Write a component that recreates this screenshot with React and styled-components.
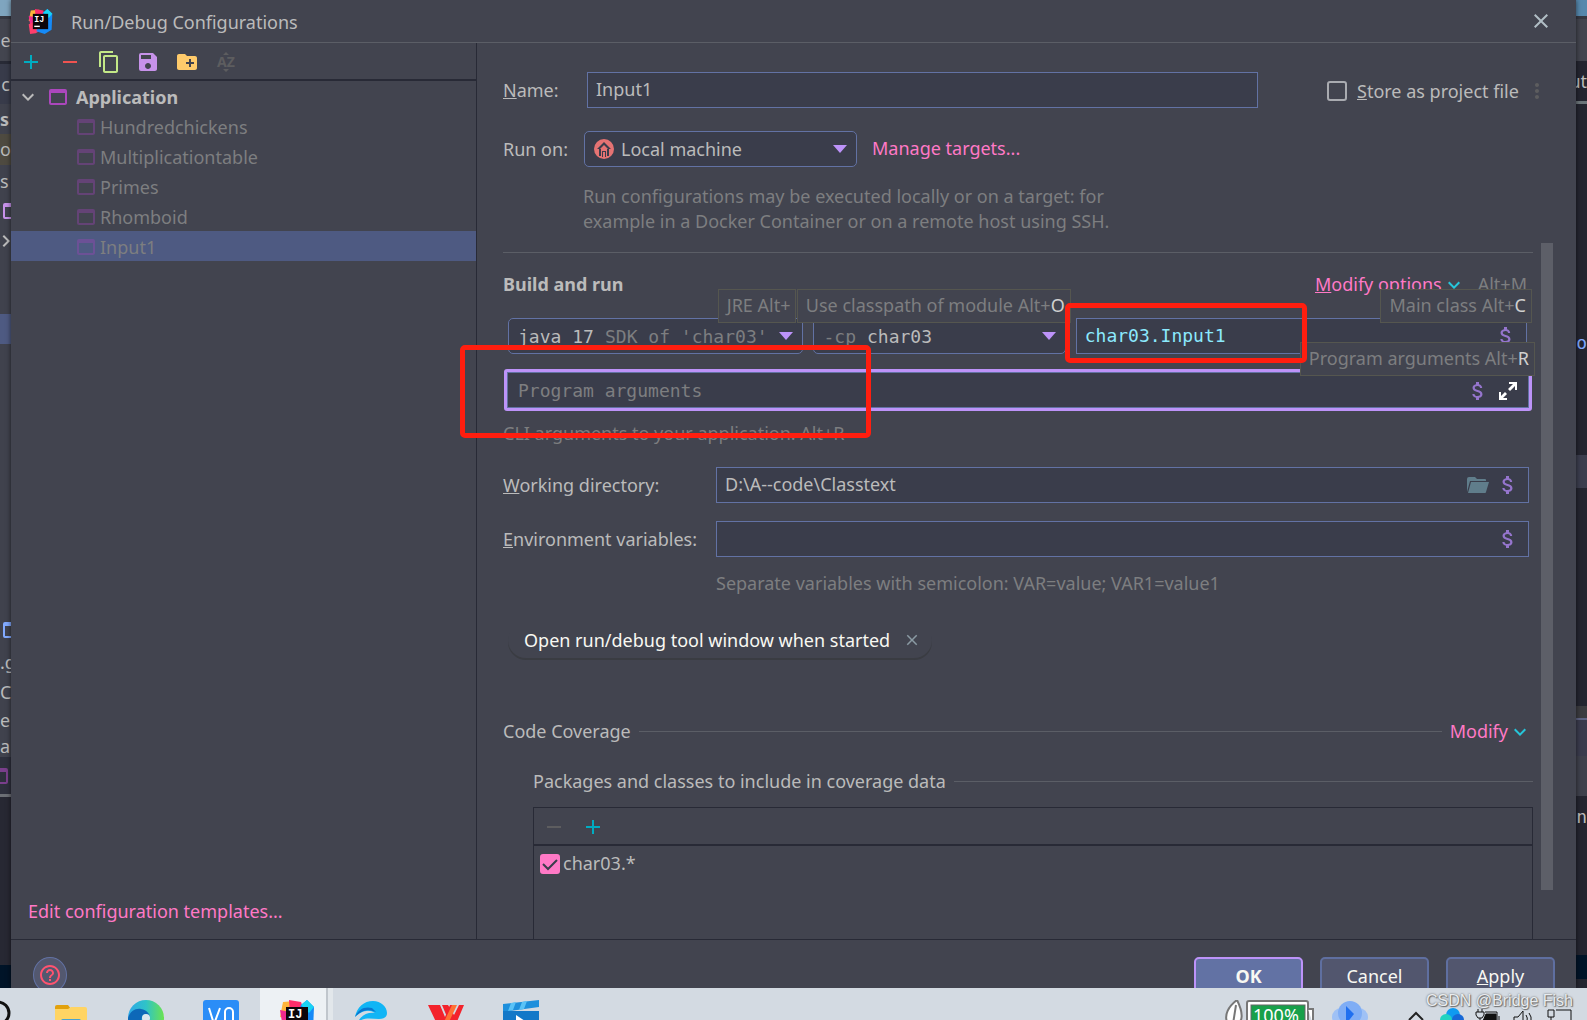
import React from 'react';
import styled, { createGlobalStyle } from 'styled-components'
import {
  MdAdd,
  MdRemove,
  MdContentCopy,
  MdSave,
  MdCreateNewFolder,
  MdWebAsset,
  MdClose,
  MdExpandMore,
  MdChevronRight,
  MdAttachMoney,
  MdHelpOutline,
  MdMoreVert,
} from 'react-icons/md'

const ui = `'Noto Sans', 'Open Sans', 'Noto Sans CJK SC', sans-serif`
const mono = `'DejaVu Sans Mono', 'Liberation Mono', monospace`

const color = {
  panel: '#42444f',
  field: '#3a3d4b',
  border: '#6272a4',
  line: '#5b5e66',
  dark: '#282a36',
  text: '#bbbbbb',
  muted: '#7d7e80',
  pink: '#ff79c6',
  purple: '#bd93f9',
  mark: '#ff1e0f',
}

const GlobalStyle = createGlobalStyle`
  * {
    box-sizing: border-box;
  }
  body {
    margin: 0;
    background: ${color.dark};
    color: ${color.text};
    font: 18px/25px ${ui};
  }
  button, input, select {
    margin: 0;
    padding: 0;
    border: 0;
    background: none;
    color: inherit;
    font: inherit;
  }
  svg {
    display: block;
    flex: none;
  }
`

const Page = styled.div`
  display: flex;
  flex-direction: column;
  height: 100vh;
  overflow: hidden;
`
const Desktop = styled.div`
  display: flex;
  flex: 1;
  min-height: 0;
`

/* slivers of the editor behind the dialog */
const Strip = styled.div`
  flex: 0 0 11px;
  overflow: hidden;
  background: ${props => props.$bg};
`
const Band = styled.div`
  display: flex;
  align-items: center;
  justify-content: ${props => props.$align || 'flex-start'};
  height: ${props => props.$h}px;
  overflow: hidden;
  background: ${props => props.$bg || 'transparent'};
  color: ${props => props.$color || color.text};
  font-weight: ${props => (props.$bold ? 700 : 400)};
  font-family: ${props => (props.$mono ? mono : ui)};
`

const Dialog = styled.section`
  display: flex;
  flex: 1;
  flex-direction: column;
  min-width: 0;
  position: relative;
  background: ${color.panel};
  box-shadow: 0 0 5px rgba(0, 0, 0, 0.6);
`
const Header = styled.header`
  display: flex;
  align-items: center;
  flex: 0 0 43px;
  gap: 18px;
  padding: 0 23px 0 17px;
  border-bottom: 1px solid ${color.line};
`
const Title = styled.h1`
  flex: 1;
  margin: 0;
  padding-top: 2px;
  font-size: 18px;
  font-weight: 400;
`
const IconButton = styled.button`
  display: flex;
  align-items: center;
  justify-content: center;
  min-width: 24px;
  height: 24px;
  color: ${props => props.$color};
`
const Body = styled.div`
  display: flex;
  flex: 1;
  min-height: 0;
`

const Sidebar = styled.aside`
  display: flex;
  flex: 0 0 466px;
  flex-direction: column;
  border-right: 1px solid ${color.dark};
`
const Toolbar = styled.div`
  display: flex;
  align-items: center;
  gap: 15px;
  height: 38px;
  padding: 2px 0 0 8px;
  border-bottom: 2px solid ${color.dark};
`
const Tree = styled.ul`
  flex: 1;
  margin: 0;
  padding: 0;
  list-style: none;
`
const TreeItem = styled.li`
  display: flex;
  align-items: center;
  gap: ${props => (props.$root ? 6 : 2)}px;
  height: 30px;
  padding: 2px 0 0 ${props => (props.$root ? 5 : 63)}px;
  background: ${props => (props.$selected ? '#4e5a82' : 'transparent')};
  color: ${props => (props.$root ? color.text : color.muted)};
  font-weight: ${props => (props.$root ? 700 : 400)};

  svg {
    color: ${props => (props.$root ? '#ab47bc' : props.$selected ? '#6c5196' : '#644376')};
  }
  svg:first-child:not(:only-of-type) {
    color: ${color.text};
  }
`
const Link = styled.a`
  display: inline-flex;
  align-items: center;
  color: ${color.pink};
  text-decoration: none;
  white-space: nowrap;

  svg {
    color: #26c6da;
  }
`
const SidebarFooter = styled.div`
  padding: 0 17px 15px;
`

const Main = styled.main`
  display: flex;
  flex: 1;
  flex-direction: column;
  min-width: 0;
  padding: 29px 23px 0 26px;
`
const FormRow = styled.div`
  display: flex;
  align-items: center;
  margin-top: ${props => props.$top || 0}px;
  padding-right: ${props => props.$right || 0}px;
`
const Label = styled.label`
  flex: 0 0 ${props => props.$width}px;
  white-space: nowrap;
`
const Field = styled.div`
  display: flex;
  align-items: center;
  position: relative;
  flex: ${props => props.$grow || 1} 1 0;
  gap: 6px;
  min-width: 0;
  height: 36px;
  padding: 0 8px;
  border: 1px solid ${color.border};
  background: ${color.field};
  color: #9575cd;
`
const TextInput = styled.input`
  flex: 1;
  min-width: 0;
  padding-bottom: 2px;
  outline: none;
  color: ${props => (props.$code ? '#8be9fd' : color.text)};
  font-family: ${props => (props.$mono ? mono : ui)};

  &::placeholder {
    color: ${color.muted};
    opacity: 1;
  }
`
const Combo = styled.div`
  display: flex;
  align-items: center;
  position: relative;
  flex: ${props => (props.$width ? `0 0 ${props.$width}px` : `${props.$grow} 1 0`)};
  gap: ${props => (props.$mono ? 11 : 7)}px;
  min-width: 0;
  height: 36px;
  padding: 0 9px;
  border: 1px solid ${color.border};
  border-radius: 5px;
  background: ${color.field};
  color: ${color.muted};
  font-family: ${props => (props.$mono ? mono : ui)};
  white-space: nowrap;

  select {
    appearance: none;
    color: ${color.text};
    outline: none;
  }
  svg:last-of-type {
    margin-left: auto;
  }
`
const Check = styled.span`
  display: grid;
  width: 20px;
  height: 20px;

  > * {
    grid-area: 1 / 1;
  }
  input {
    appearance: none;
    width: 20px;
    height: 20px;
    border: 2px solid #a9abb0;
    border-radius: 3px;
  }
  input:checked {
    border-color: ${color.pink};
    background: ${color.pink};
  }
  svg {
    pointer-events: none;
  }
`
const StoreOption = styled.div`
  display: flex;
  align-items: center;
  flex: 0 0 226px;
  gap: 10px;
  margin-left: 69px;
  padding-top: 2px;
  white-space: nowrap;

  button {
    margin-left: -4px;
  }
`
const Hint = styled.p`
  margin: ${props => props.$top}px 0 0 ${props => props.$left || 0}px;
  max-width: 560px;
  color: ${color.muted};
`
const TargetsLink = styled(Link)`
  padding: 0 0 2px 15px;
`
const ScrollArea = styled.div`
  display: flex;
  flex: 1;
  gap: 8px;
  min-height: 0;
  margin-top: 9px;
`
const ScrollContent = styled.div`
  display: flex;
  flex: 1;
  flex-direction: column;
  min-width: 0;
`
const ScrollThumb = styled.div`
  flex: 0 0 12px;
  height: 93%;
  background: #5d5f68;
`
const Rule = styled.hr`
  flex: none;
  width: 100%;
  margin: 9px 0 0;
  border: 0;
  border-top: 1px solid ${color.line};
`
const SectionHead = styled.div`
  display: flex;
  align-items: center;
  gap: 8px;
  margin-top: ${props => props.$top}px;
  padding-left: ${props => props.$left || 0}px;
  padding-right: ${props => props.$right || 0}px;
`
const SectionTitle = styled.h2`
  margin: 0;
  font-size: 18px;
  font-weight: ${props => (props.$bold ? 700 : 400)};
`
const Filler = styled.span`
  flex: 1;
  height: 1px;
  background: ${props => (props.$line ? color.line : 'transparent')};
`
const Shortcut = styled.span`
  padding-left: 4px;
  color: ${color.muted};
`
const CommandRow = styled.div`
  display: flex;
  gap: 10px;
  margin: 21px 6px 0 5px;
`
const ArgumentsField = styled(Field)`
  flex: none;
  height: 42px;
  margin: 15px 1px 0;
  padding: 2px 9px 0 11px;
  border: 3px solid ${color.purple};
  border-radius: 3px;
  box-shadow: inset 0 0 0 1px ${color.border};
`
const Tooltip = styled.span`
  position: absolute;
  z-index: 1;
  right: ${props => props.$right || -6}px;
  bottom: calc(100% - 4px);
  height: 34px;
  padding: 3px 5px 3px 8px;
  border: 1px solid #55564f;
  background: ${color.panel};
  color: ${color.muted};
  font-family: ${ui};
  white-space: nowrap;

  b {
    color: #d0d0d0;
    font-weight: 400;
  }
`
const Marker = styled.span`
  position: absolute;
  z-index: 2;
  left: ${props => props.$left}px;
  top: ${props => props.$top}px;
  width: ${props => props.$width}px;
  height: ${props => props.$height}px;
  border: 5px solid ${color.mark};
  border-radius: 5px;
  pointer-events: none;
`
const Chip = styled.div`
  display: flex;
  align-items: center;
  align-self: flex-start;
  gap: 10px;
  height: 36px;
  margin: 26px 0 0 5px;
  padding: 0 8px 0 16px;
  border-radius: 18px;
  box-shadow: 0 2px 0 #3a3c42;
  color: #f8f8f2;
`
const Packages = styled.div`
  flex: 1;
  margin: 13px 0 0 30px;
  border: 1px solid ${color.dark};
  border-bottom: 0;
`
const PackageRow = styled.label`
  display: flex;
  align-items: center;
  gap: 3px;
  padding: 5px 6px;
`

const Footer = styled.footer`
  display: flex;
  flex: 0 0 49px;
  align-items: flex-start;
  gap: 17px;
  padding: 17px 21px 0 22px;
  overflow: hidden;
  border-top: 1px solid ${color.dark};
`
const HelpButton = styled.button`
  display: flex;
  align-items: center;
  justify-content: center;
  width: 34px;
  height: 36px;
  margin-right: auto;
  border: 1px solid ${color.border};
  border-radius: 50%;
  background: #53586f;
  color: #ff5370;
`
const Button = styled.button`
  width: 109px;
  height: 38px;
  border: 2px solid ${props => (props.$primary ? color.purple : '#5f6fa0')};
  border-radius: 5px;
  background: ${props => (props.$primary ? '#6272a4' : '#52566e')};
  color: #f8f8f2;
  font-weight: ${props => (props.$primary ? 700 : 400)};
`

const Taskbar = styled.nav`
  display: flex;
  position: relative;
  flex: 0 0 32px;
  overflow: hidden;
  background: #d3dae2;
`
const TaskItem = styled.button`
  display: flex;
  align-items: flex-start;
  justify-content: center;
  width: ${props => props.$width || 75}px;
  height: 32px;
  margin-right: ${props => props.$gap || 0}px;
  padding-top: 12px;
  overflow: hidden;
`
const ActiveTask = styled(TaskItem)`
  width: 73px;
  margin-left: 2px;
  background: #edf1f4;
  box-shadow: inset -5px 0 #e2e7eb, inset -7px 0 #c0c6cc;
`
const Tray = styled.div`
  display: flex;
  margin-left: auto;
  padding-right: 9px;
`
const Watermark = styled.span`
  position: absolute;
  right: 14px;
  top: 1px;
  color: #e9ecef;
  font: 16px/24px 'Liberation Sans', sans-serif;
  text-shadow: 0 0 2px #555, 1px 1px 1px #777;
`

const IdeaLogo = ({ size }) => (
  <svg width={size} height={size} viewBox="0 0 36 36">
    <path d="M4 2l12-1 4 8-12 10-7-2z" fill="#ffb43a" />
    <path d="M10 0l12 2 3 8-14 4z" fill="#ff2d6b" />
    <path d="M1 10l10 2v14l-8-4z" fill="#f0288c" />
    <path d="M1 22l9-4 10 12-9 5-8 1z" fill="#ff3e6c" />
    <path d="M22 5l6-5 7 7-1 23-10 6-12-4z" fill="#158af7" />
    <path d="M22 5l6-5 7 7-5 6z" fill="#19d3f3" />
    <rect x="7" y="7" width="22" height="22" fill="#0d0509" />
    <text x="9" y="18" fill="#fff" fontSize="12" fontWeight="700" fontFamily="Liberation Mono, monospace">IJ</text>
    <rect x="9" y="24" width="8" height="2" fill="#fff" />
  </svg>
)
const SortIcon = () => (
  <svg width="24" height="24" viewBox="0 0 24 24" fill="#5d5d5f">
    <path d="M9 5l3-3 3 3zM9 19l3 3 3-3z" />
    <text x="12" y="17" textAnchor="middle" fontSize="14" fontWeight="700" fontFamily="Noto Sans, sans-serif">AZ</text>
  </svg>
)
const Arrow = () => (
  <svg width="14" height="8" viewBox="0 0 14 8"><path d="M0 0h14L7 8z" fill="#bd93f9" /></svg>
)
const HomeIcon = () => (
  <svg width="20" height="20" viewBox="0 0 20 20">
    <circle cx="10" cy="10" r="10" fill="#e57373" />
    <path d="M10 3l-7 7h2v7h10v-7h2z" fill="#3a3d4b" />
    <path d="M10 6l-4 4v0h1v8h6v-8h1z" fill="#e57373" />
    <path d="M8 12h4v6H8z" fill="#3a3d4b" />
    <path d="M9 13h2v5H9z" fill="#e57373" />
  </svg>
)
const ExpandIcon = () => (
  <svg width="18" height="18" viewBox="0 0 18 18" fill="#fff">
    <path d="M10 0h8v8h-2V4l-5 5-2-2 5-5h-4z" />
    <path d="M8 18H0v-8h2v4l4-4 2 2-4 4h4z" />
  </svg>
)
const OpenFolder = () => (
  <svg width="22" height="16" viewBox="0 0 22 16" fill="#607d8b">
    <path d="M0 15V2a2 2 0 012-2h6l2 2h8a1 1 0 011 1v1H3z" />
    <path d="M4 5h18l-3 10a1 1 0 01-1 1H1z" />
  </svg>
)
const Tick = () => (
  <svg width="20" height="20" viewBox="0 0 20 20">
    <path d="M3 10l5 5 9-9" fill="none" stroke="#3a3d4b" strokeWidth="2" />
  </svg>
)

const SearchTask = () => (
  <svg width="33" height="24"><circle cx="-2" cy="13" r="11" fill="none" stroke="#111" strokeWidth="3" /></svg>
)
const FolderTask = () => (
  <svg width="32" height="24">
    <path d="M0 7a2 2 0 012-2h11l3 4H0z" fill="#e2a10d" />
    <path d="M0 9h13l3-2h14a2 2 0 012 2v15H0z" fill="#ffd463" />
    <path d="M6 24v-3a2 2 0 012-2h16a2 2 0 012 2v3z" fill="#4aa3d0" />
  </svg>
)
const EdgeTask = () => (
  <svg width="36" height="36" viewBox="0 0 36 36">
    <defs>
      <linearGradient id="edge" x1="0" x2="1">
        <stop offset="0" stopColor="#2da8e8" />
        <stop offset="0.5" stopColor="#2fc3c8" />
        <stop offset="1" stopColor="#6be34f" />
      </linearGradient>
    </defs>
    <circle cx="18" cy="18" r="18" fill="url(#edge)" />
    <path d="M0 18c2-7 8-10 13-9 6 1 9 5 9 9l-4-4c-4 0-5 4-4 8H0z" fill="#0d68b8" />
    <circle cx="18" cy="18" r="4" fill="#dce7ee" />
  </svg>
)
const VncTask = () => (
  <svg width="36" height="36">
    <rect width="36" height="36" rx="3" fill="#2b8df7" />
    <path d="M6 8l5 16 6-16M22 21v-9a4 4 0 018 0v9" fill="none" stroke="#fff" strokeWidth="2" />
  </svg>
)
const BrowserTask = () => (
  <svg width="34" height="24">
    <path d="M1 17C3 7 10 1 19 1c8 0 14 6 14 12 0 4-3 6-8 6-7 0-15-2-21 3 3-7 10-10 17-9-7-5-15-1-20 4z" fill="#11b5f5" />
    <path d="M1 17C4 9 11 6 18 8l4 4C13 8 7 11 1 17z" fill="#0a76cf" />
  </svg>
)
const WpsTask = () => (
  <svg width="36" height="24">
    <path d="M0 5h12l5 12 5-12h4l-9 19H9z" fill="#f3232c" />
    <path d="M14 5h6l6 10 5-10h5l-8 19h-6z" fill="#f3232c" />
    <path d="M24 5l-9 19h5l9-19z" fill="#ff7134" />
  </svg>
)
const VideoTask = () => (
  <svg width="36" height="24">
    <path d="M0 4L36 0v7L0 12z" fill="#1d8fdc" />
    <path d="M8 3l5-1-3 8-5 1zM19 2l5-1-3 8-5 1z" fill="#59c2f7" />
    <path d="M0 11h36v13H0z" fill="#1378c8" />
    <path d="M13 15l9 6-9 5z" fill="#fff" />
  </svg>
)
const LeafTask = () => (
  <svg width="20" height="24">
    <path d="M13 0c4 8 6 14 4 20l-4 4H4C-1 15 5 6 13 0zM12 5L9 24" fill="#fff" stroke="#777" strokeWidth="2" />
  </svg>
)
const PowerTask = () => (
  <svg width="70" height="24">
    <rect x="1" y="1" width="61" height="30" rx="2" fill="#fff" stroke="#777" strokeWidth="2" />
    <path d="M62 9h5v15" fill="#fff" stroke="#777" strokeWidth="2" />
    <rect x="5" y="5" width="54" height="24" fill="#18a04a" stroke="#666" />
    <text x="7" y="22" fill="#fff" fontSize="18" fontFamily="Noto Sans, sans-serif">100%</text>
  </svg>
)
const CloudTask = () => (
  <svg width="36" height="24">
    <circle cx="9" cy="17" r="9" fill="#9fc1f5" />
    <circle cx="27" cy="17" r="9" fill="#9fc1f5" />
    <circle cx="18" cy="13" r="12" fill="#7fadf5" />
    <path d="M14 6l8 8-8 10z" fill="#1f6ff0" />
  </svg>
)
const UpTask = () => (
  <svg width="18" height="20"><path d="M2 20l7-7 7 7" fill="none" stroke="#222" strokeWidth="2" /></svg>
)
const GemTask = () => (
  <svg width="24" height="20">
    <circle cx="13" cy="15" r="7" fill="#0f9af0" />
    <circle cx="6" cy="20" r="6" fill="#22d3c0" />
    <circle cx="18" cy="20" r="6" fill="#1668d6" />
  </svg>
)
const PlugTask = () => (
  <svg width="26" height="20" fill="none" stroke="#111">
    <path d="M3 9v3M7 9v3M1 12h8v3l-2 3H3l-2-3zM5 18v3" />
    <path d="M10 12h12v8M24 16v4" />
    <path d="M11 14h10v7H8z" fill="#111" />
  </svg>
)
const SoundTask = () => (
  <svg width="22" height="20" fill="none" stroke="#111">
    <path d="M1 20v-3h4l5-6v10M13 15q2 3 1 6M16 13q3 4 2 8" />
  </svg>
)
const NetworkTask = () => (
  <svg width="26" height="20" fill="none" stroke="#111">
    <path d="M9 10h15v11M1 10h6v7H1zM4 17v4" />
  </svg>
)

const configurations = ['Hundredchickens', 'Multiplicationtable', 'Primes', 'Rhomboid', 'Input1']

const Dollar = () => (
  <IconButton type="button" $color="#9575cd" aria-label="Insert macro">
    <MdAttachMoney size={24} />
  </IconButton>
)

const LeftStrip = () => (
  <Strip $bg="#40424d">
    <Band $h={16} $bg="#7fa5bf" />
    <Band $h={3} $bg="#363842" />
    <Band $h={42} $bg="#43454f" $align="center">e</Band>
    <Band $h={3} $bg={color.dark} />
    <Band $h={40} $bg="#383b4a" $align="center">c</Band>
    <Band $h={30} $bold>s</Band>
    <Band $h={31} $bg="#4e4a40">o</Band>
    <Band $h={32}>s</Band>
    <Band $h={28} $color="#c792ea"><MdWebAsset size={24} /></Band>
    <Band $h={32} $align="center"><MdChevronRight size={24} /></Band>
    <Band $h={57} />
    <Band $h={30} $bg="#4e5a82" />
    <Band $h={271} />
    <Band $h={30} $color="#82aaff"><MdWebAsset size={24} /></Band>
    <Band $h={34}>.g</Band>
    <Band $h={26}>C</Band>
    <Band $h={30}>e</Band>
    <Band $h={22}>a</Band>
    <Band $h={37} $bg="#2e303d" $color="#7a3f8c" $align="flex-end"><MdWebAsset size={24} /></Band>
    <Band $h={3} $bg="#6c6f75" />
    <Band $h={168} $bg="#272833" />
    <Band $h={24} $bg="#001428" />
  </Strip>
)

const RightStrip = () => (
  <Strip $bg="#242530">
    <Band $h={16} $bg="#5688ad" />
    <Band $h={3} $bg="#363842" />
    <Band $h={42} $bg="#43454f" />
    <Band $h={40} $align="flex-end">ut</Band>
    <Band $h={3} $bg="#6c757a" />
    <Band $h={224} />
    <Band $h={28} $color="#82aaff" $mono $align="flex-end">o</Band>
    <Band $h={99} />
    <Band $h={33} $bg="#3c3e4e" />
    <Band $h={218} />
    <Band $h={12} $bg="#3c3c40" />
    <Band $h={2} $bg="#5f6484" />
    <Band $h={36} $bg="#3a3c4d" />
    <Band $h={40} $bg="#3f414c" />
    <Band $h={40} $mono $align="flex-end">n</Band>
    <Band $h={119} />
    <Band $h={24} $bg="#001428" />
  </Strip>
)

const App = () => (
  <Page>
    <GlobalStyle />
    <Desktop>
      <LeftStrip />
      <Dialog>
        <Header>
          <IdeaLogo size={25} />
          <Title>Run/Debug Configurations</Title>
          <IconButton type="button" $color="#b0bec5" aria-label="Close"><MdClose size={24} /></IconButton>
        </Header>
        <Body>
          <Sidebar>
            <Toolbar>
              <IconButton type="button" $color="#00acc1" aria-label="Add"><MdAdd size={24} /></IconButton>
              <IconButton type="button" $color="#ef5350" aria-label="Remove"><MdRemove size={24} /></IconButton>
              <IconButton type="button" $color="#c3e887" aria-label="Copy"><MdContentCopy size={24} /></IconButton>
              <IconButton type="button" $color="#c792ea" aria-label="Save"><MdSave size={24} /></IconButton>
              <IconButton type="button" $color="#ffcb6b" aria-label="New folder"><MdCreateNewFolder size={24} /></IconButton>
              <IconButton type="button" aria-label="Sort"><SortIcon /></IconButton>
            </Toolbar>
            <Tree>
              <TreeItem $root>
                <MdExpandMore size={24} />
                <MdWebAsset size={24} />
                <span>Application</span>
              </TreeItem>
              {configurations.map(name => (
                <TreeItem key={name} $selected={name === 'Input1'}>
                  <MdWebAsset size={24} />
                  <span>{name}</span>
                </TreeItem>
              ))}
            </Tree>
            <SidebarFooter>
              <Link href="#templates">Edit configuration templates...</Link>
            </SidebarFooter>
          </Sidebar>

          <Main>
            <FormRow>
              <Label htmlFor="name" $width={84}><u>N</u>ame:</Label>
              <Field><TextInput id="name" defaultValue="Input1" /></Field>
              <StoreOption>
                <Check><input type="checkbox" id="store" /></Check>
                <label htmlFor="store"><u>S</u>tore as project file</label>
                <IconButton type="button" $color="#5d5d5f" aria-label="More"><MdMoreVert size={24} /></IconButton>
              </StoreOption>
            </FormRow>
            <FormRow $top={23}>
              <Label htmlFor="target" $width={81}>Run on:</Label>
              <Combo $width={273}>
                <HomeIcon />
                <select id="target"><option>Local machine</option></select>
                <Arrow />
              </Combo>
              <TargetsLink href="#targets">Manage targets...</TargetsLink>
            </FormRow>
            <Hint $top={17} $left={80}>
              Run configurations may be executed locally or on a target: for
              example in a Docker Container or on a remote host using SSH.
            </Hint>

            <ScrollArea>
              <ScrollContent>
                <Rule />
                <SectionHead $top={19} $right={6}>
                  <SectionTitle $bold>Build and run</SectionTitle>
                  <Filler />
                  <Link href="#options"><span><u>M</u>odify options</span><MdExpandMore size={24} /></Link>
                  <Shortcut>Alt+M</Shortcut>
                </SectionHead>
                <CommandRow>
                  <Combo $mono $grow={274}>
                    <select aria-label="JRE"><option>java 17</option></select>
                    <span>SDK of 'char03'</span>
                    <Arrow />
                    <Tooltip $right={6}>JRE Alt+</Tooltip>
                  </Combo>
                  <Combo $mono $grow={231}>
                    <label htmlFor="classpath">-cp</label>
                    <select id="classpath"><option>char03</option></select>
                    <Arrow />
                    <Tooltip>Use classpath of module Alt+<b>O</b></Tooltip>
                  </Combo>
                  <Field $grow={431}>
                    <TextInput aria-label="Main class" $code $mono defaultValue="char03.Input1" />
                    <Dollar />
                    <Tooltip>Main class Alt+<b>C</b></Tooltip>
                    <Marker $left={-12} $top={-16} $width={242} $height={60} />
                  </Field>
                </CommandRow>
                <ArgumentsField>
                  <TextInput aria-label="Program arguments" $mono placeholder="Program arguments" />
                  <Dollar />
                  <IconButton type="button" aria-label="Expand"><ExpandIcon /></IconButton>
                  <Tooltip>Program arguments Alt+<b>R</b></Tooltip>
                  <Marker $left={-47} $top={-27} $width={411} $height={93} />
                </ArgumentsField>
                <Hint $top={10}>CLI arguments to your application. Alt+R</Hint>

                <FormRow $top={21} $right={4}>
                  <Label htmlFor="directory" $width={213}><u>W</u>orking directory:</Label>
                  <Field>
                    <TextInput id="directory" defaultValue="D:\A--code\Classtext" />
                    <IconButton type="button" aria-label="Browse"><OpenFolder /></IconButton>
                    <Dollar />
                  </Field>
                </FormRow>
                <FormRow $top={18} $right={4}>
                  <Label htmlFor="environment" $width={213}><u>E</u>nvironment variables:</Label>
                  <Field>
                    <TextInput id="environment" />
                    <Dollar />
                  </Field>
                </FormRow>
                <Hint $top={14} $left={213}>Separate variables with semicolon: VAR=value; VAR1=value1</Hint>

                <Chip>
                  Open run/debug tool window when started
                  <IconButton type="button" $color="#8a9aa3" aria-label="Dismiss"><MdClose size={18} /></IconButton>
                </Chip>

                <SectionHead $top={61} $right={1}>
                  <SectionTitle>Code Coverage</SectionTitle>
                  <Filler $line />
                  <Link href="#coverage">Modify<MdExpandMore size={24} /></Link>
                </SectionHead>
                <SectionHead $top={25} $left={30}>
                  <SectionTitle>Packages and classes to include in coverage data</SectionTitle>
                  <Filler $line />
                </SectionHead>
                <Packages>
                  <Toolbar>
                    <IconButton type="button" $color="#5d5d5f" aria-label="Remove package"><MdRemove size={24} /></IconButton>
                    <IconButton type="button" $color="#00acc1" aria-label="Add package"><MdAdd size={24} /></IconButton>
                  </Toolbar>
                  <PackageRow>
                    <Check><input type="checkbox" defaultChecked /><Tick /></Check>
                    char03.*
                  </PackageRow>
                </Packages>
              </ScrollContent>
              <ScrollThumb />
            </ScrollArea>
          </Main>
        </Body>
        <Footer>
          <HelpButton type="button" aria-label="Help"><MdHelpOutline size={24} /></HelpButton>
          <Button type="button" $primary>OK</Button>
          <Button type="button">Cancel</Button>
          <Button type="button"><u>A</u>pply</Button>
        </Footer>
      </Dialog>
      <RightStrip />
    </Desktop>

    <Taskbar>
      <TaskItem $width={33} aria-label="Search"><SearchTask /></TaskItem>
      <TaskItem aria-label="Files"><FolderTask /></TaskItem>
      <TaskItem aria-label="Edge"><EdgeTask /></TaskItem>
      <TaskItem aria-label="VNC"><VncTask /></TaskItem>
      <ActiveTask aria-label="IntelliJ IDEA"><IdeaLogo size={36} /></ActiveTask>
      <TaskItem aria-label="Browser"><BrowserTask /></TaskItem>
      <TaskItem aria-label="WPS"><WpsTask /></TaskItem>
      <TaskItem aria-label="Video"><VideoTask /></TaskItem>
      <Tray>
        <TaskItem $width={20} aria-label="Power saver"><LeafTask /></TaskItem>
        <TaskItem $width={74} $gap={14} aria-label="Charge"><PowerTask /></TaskItem>
        <TaskItem $width={36} $gap={30} aria-label="Cloud"><CloudTask /></TaskItem>
        <TaskItem $width={36} aria-label="Hidden icons"><UpTask /></TaskItem>
        <TaskItem $width={36} aria-label="Widgets"><GemTask /></TaskItem>
        <TaskItem $width={36} aria-label="Battery"><PlugTask /></TaskItem>
        <TaskItem $width={36} aria-label="Volume"><SoundTask /></TaskItem>
        <TaskItem $width={36} aria-label="Network"><NetworkTask /></TaskItem>
      </Tray>
      <Watermark>CSDN @Bridge Fish</Watermark>
    </Taskbar>
  </Page>
)

export default App;
